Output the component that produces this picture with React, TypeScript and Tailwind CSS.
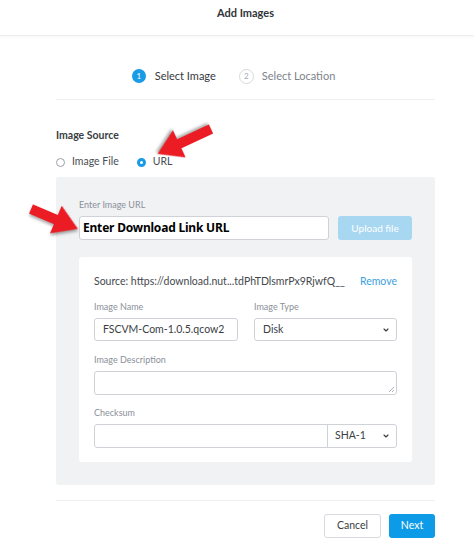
import { ChevronDown } from "lucide-react";

function Arrow({ x, y, angle, length }: { x: number; y: number; angle: number; length: number }) {
  // tail at (0,0), tip at (length,0)
  const head = 24;
  const pts = `0,-5 ${length - head},-5 ${length - head},-15 ${length},0 ${length - head},15 ${length - head},5 0,5`;
  return (
    <polygon
      points={pts}
      transform={`translate(${x} ${y}) rotate(${angle})`}
      fill="#ec1c24"
      style={{ filter: "drop-shadow(1px 2px 1.5px rgba(0,0,0,0.35))" }}
    />
  );
}

function Label({ children }: { children: React.ReactNode }) {
  return <div className="text-[9px] text-[#8b9099] leading-[12px] mb-[5px]">{children}</div>;
}

export default function App() {
  return (
    <div className="relative w-[474px] h-[558px] bg-white font-['Lato',sans-serif] text-[#3c4045] overflow-hidden">
      <div className="h-[36px] pt-[5px] pl-[17px] text-center text-[11px] font-bold text-[#2f3338] border-b border-[#eceef0] shadow-[0_1px_2px_rgba(0,0,0,0.04)]">
        Add Images
      </div>

      <div className="ml-[56px] w-[379px]">
        <div className="mt-[32px] flex justify-center items-center pr-[24px] h-[16px]">
          <span className="w-[14px] h-[14px] rounded-full bg-[#1a9be6] text-white text-[8px] flex items-center justify-center">1</span>
          <span className="ml-[9px] text-[11px] text-[#34383d]">Select Image</span>
          <span className="ml-[23px] w-[15px] h-[15px] rounded-full border border-[#d6d9dd] text-[#a4a9b0] text-[8px] flex items-center justify-center">2</span>
          <span className="ml-[8px] text-[11px] text-[#7c828a]">Select Location</span>
        </div>
        <div className="mt-[15px] border-t border-[#eef0f2]" />

        <div className="mt-[28px] text-[10.5px] font-bold text-[#3a3e43] leading-[14px]">Image Source</div>
        <div className="mt-[13px] flex items-center h-[14px] text-[10.5px]">
          <span className="w-[9px] h-[9px] rounded-full border border-[#9aa0a7] bg-white" />
          <span className="ml-[7px] text-[#4a4e53]">Image File</span>
          <span className="ml-[18px] w-[9px] h-[9px] rounded-full border-[3px] border-[#1a9be6] bg-white" />
          <span className="ml-[7px] text-[#4a4e53]">URL</span>
        </div>

        <div className="mt-[8px] bg-[#f1f2f4] rounded-[2px] px-[23px] pt-[22px] pb-[23px]">
          <Label>Enter Image URL</Label>
          <div className="flex gap-[9px] h-[24px]">
            <div className="flex-1 bg-white border border-[#cfd3d8] rounded-[3px] flex items-center px-[3px] text-[12px] font-bold text-black font-['Noto_Sans',sans-serif] tracking-[-0.2px]">
              Enter Download Link URL
            </div>
            <div className="w-[74px] bg-[#a8d7f2] rounded-[3px] text-white text-[10px] flex items-center justify-center">
              Upload file
            </div>
          </div>

          <div className="mt-[17px] bg-white rounded-[3px] px-[15px] pt-[17px] pb-[14px]">
            <div className="flex justify-between items-center text-[10.5px] leading-[14px]">
              <span className="text-[#44484d]">Source: https://download.nut...tdPhTDlsmrPx9RjwfQ__</span>
              <span className="text-[#3ba0dc]">Remove</span>
            </div>

            <div className="mt-[13px] flex gap-[16px]">
              <div className="w-[144px]">
                <Label>Image Name</Label>
                <div className="h-[23px] border border-[#cfd3d8] rounded-[3px] px-[8px] flex items-center text-[10.5px] text-[#3a3e43]">
                  FSCVM-Com-1.0.5.qcow2
                </div>
              </div>
              <div className="flex-1">
                <Label>Image Type</Label>
                <div className="h-[23px] border border-[#cfd3d8] rounded-[3px] pl-[8px] pr-[6px] flex items-center justify-between text-[10.5px] text-[#3a3e43]">
                  Disk
                  <ChevronDown size={8} strokeWidth={3.5} className="text-[#3a3e43]" />
                </div>
              </div>
            </div>

            <div className="mt-[13px]">
              <Label>Image Description</Label>
              <div className="relative h-[24px] border border-[#cfd3d8] rounded-[3px]">
                <svg className="absolute right-[1px] bottom-[1px]" width="7" height="7" viewBox="0 0 7 7">
                  <path d="M6 1 L1 6 M6 4 L4 6" stroke="#9aa0a7" strokeWidth="0.8" />
                </svg>
              </div>
            </div>

            <div className="mt-[12px]">
              <Label>Checksum</Label>
              <div className="flex h-[24px] border border-[#cfd3d8] rounded-[3px]">
                <div className="flex-1" />
                <div className="w-[69px] border-l border-[#cfd3d8] pl-[7px] pr-[6px] flex items-center justify-between text-[10.5px] text-[#3a3e43]">
                  SHA-1
                  <ChevronDown size={8} strokeWidth={3.5} className="text-[#3a3e43]" />
                </div>
              </div>
            </div>
          </div>
        </div>

        <div className="mt-[15px] border-t border-[#eef0f2]" />
        <div className="mt-[13px] flex justify-end gap-[8px] h-[24px]">
          <div className="w-[57px] border border-[#d6d9dd] rounded-[3px] flex items-center justify-center text-[10.5px] text-[#3a3e43]">
            Cancel
          </div>
          <div className="w-[46px] bg-[#0d9be8] rounded-[3px] flex items-center justify-center text-[10.5px] text-white">
            Next
          </div>
        </div>
      </div>

      <svg className="absolute inset-0 pointer-events-none" width="474" height="558">
        <Arrow x={211} y={129} angle={155} length={59} />
        <Arrow x={31} y={209} angle={23} length={51} />
      </svg>
    </div>
  );
}
